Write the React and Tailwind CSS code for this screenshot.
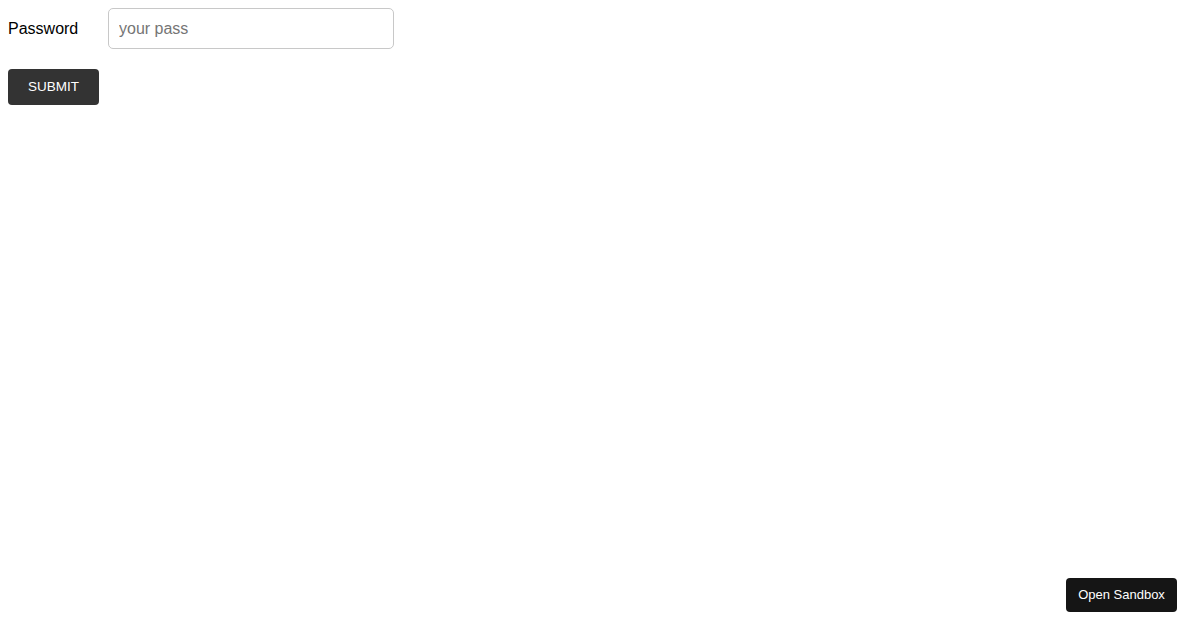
export default function App() {
  return (
    <div className="min-h-[630px] bg-white p-2 font-['Liberation_Sans',Arial,sans-serif] text-black">
      <form className="flex flex-col gap-5" onSubmit={(e) => e.preventDefault()}>
        <div className="flex items-center">
          <label htmlFor="pass" className="w-[100px] text-base">Password</label>
          <input
            id="pass"
            type="password"
            placeholder="your pass"
            className="h-[41px] w-[286px] rounded-[5px] border border-[#c8c8c8] px-[10px] text-base placeholder:text-[#757575] outline-none"
          />
        </div>
        <div>
          <button type="submit" className="h-9 w-[91px] rounded bg-[#333333] text-[13.5px] text-white">
            SUBMIT
          </button>
        </div>
      </form>
      <button className="fixed bottom-[18px] right-[23px] h-[34px] w-[111px] rounded bg-[#151515] text-[13px] text-white">
        Open Sandbox
      </button>
    </div>
  );
}
